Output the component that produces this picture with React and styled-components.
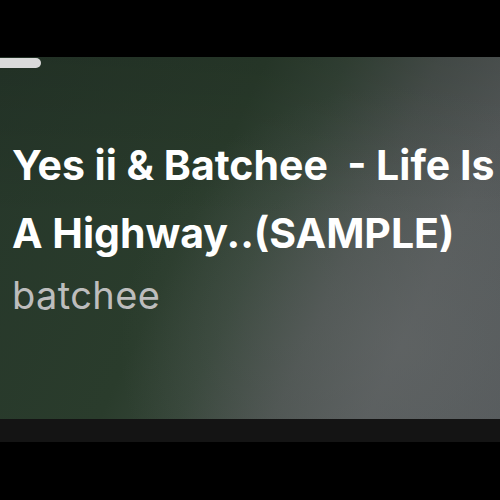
import styled, { createGlobalStyle } from 'styled-components';

const GlobalStyle = createGlobalStyle`
  html, body {
    margin: 0;
    padding: 0;
    background: #000;
  }
  body {
    font-family: Inter, "Noto Sans", "Liberation Sans", sans-serif;
  }
`

const Screen = styled.div`
  display: flex;
  flex-direction: column;
  width: 500px;
  height: 500px;
  background: #000;
  overflow: hidden;
`

const TopBar = styled.div`
  height: 57px;
  flex: none;
`

const Artwork = styled.div`
  display: flex;
  flex-direction: column;
  height: 362px;
  flex: none;
  background:
    linear-gradient(180deg, rgba(0, 0, 0, 0.12) 0%, rgba(0, 0, 0, 0) 45%),
    radial-gradient(ellipse 280px 260px at 80% 80%, rgba(102, 105, 106, 0.5) 0%, rgba(90, 95, 95, 0) 100%),
    linear-gradient(115deg, #26372a 0%, #2a3c2c 40%, #354538 52%, #4a524e 66%, #565b5b 80%, #53585a 100%);
`

const Progress = styled.div`
  width: 41px;
  height: 10px;
  margin-top: 1px;
  background: #dadada;
  border-radius: 0 5px 5px 0;
`

const Info = styled.div`
  display: flex;
  flex-direction: column;
  padding: 63px 4px 0 12px;
`

const Title = styled.h1`
  margin: 0;
  font-size: 41px;
  font-weight: 700;
  line-height: 68px;
  letter-spacing: 0;
  color: #fff;
  white-space: pre-wrap;
`

const Artist = styled.p`
  margin: 0;
  font-size: 38px;
  font-weight: 400;
  line-height: 56px;
  letter-spacing: 0.4px;
  color: #bdbdbd;
`

const BottomBand = styled.div`
  height: 23px;
  flex: none;
  background: #141414;
`

const App = () => {
  return (
    <>
      <GlobalStyle />
      <Screen>
        <TopBar />
        <Artwork>
          <Progress />
          <Info>
            <Title>{'Yes ii & Batchee  - Life Is A Highway..(SAMPLE)'}</Title>
            <Artist>batchee</Artist>
          </Info>
        </Artwork>
        <BottomBand />
      </Screen>
    </>
  )
}

export default App
